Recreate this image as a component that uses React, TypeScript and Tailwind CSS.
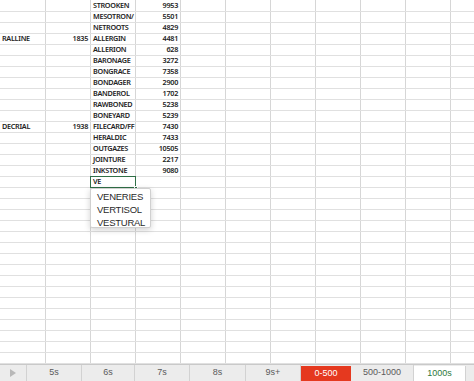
import React from "react";

type Row = [string, string, string, string];

const data: Row[] = [
  ["", "", "STROOKEN", "9953"],
  ["", "", "MESOTRON/", "5501"],
  ["", "", "NETROOTS", "4829"],
  ["RALLINE", "1835", "ALLERGIN", "4481"],
  ["", "", "ALLERION", "628"],
  ["", "", "BARONAGE", "3272"],
  ["", "", "BONGRACE", "7358"],
  ["", "", "BONDAGER", "2900"],
  ["", "", "BANDEROL", "1702"],
  ["", "", "RAWBONED", "5238"],
  ["", "", "BONEYARD", "5239"],
  ["DECRIAL", "1938", "FILECARD/FF", "7430"],
  ["", "", "HERALDIC", "7433"],
  ["", "", "OUTGAZES", "10505"],
  ["", "", "JOINTURE", "2217"],
  ["", "", "INKSTONE", "9080"],
];

const TOTAL_ROWS = 33;
const EMPTY_COLS = 7;

function Cell({
  text,
  align,
  first,
}: {
  text?: string;
  align: "l" | "r";
  first?: boolean;
}) {
  return (
    <div
      className={
        (first ? "w-[46px] " : "w-[45px] ") +
        "shrink-0 h-full border-r border-[#d6d6d6] overflow-hidden whitespace-nowrap flex items-center text-[7.25px] font-semibold tracking-[-0.3px] text-[#222] leading-none " +
        (align === "r" ? "justify-end pr-[2px]" : "justify-start pl-[2px]")
      }
    >
      {text}
    </div>
  );
}

function GridRow({ i }: { i: number }) {
  const r = data[i] ?? ["", "", "", ""];
  const isVE = i === 16;
  return (
    <div
      className={
        (i === 0 ? "h-[12px] " : "h-[11px] ") +
        "flex shrink-0 border-b border-[#e0e0e0]"
      }
    >
      <Cell text={r[0]} align="l" first />
      <Cell text={r[1]} align="r" />
      {isVE ? (
        <div className="relative w-[45px] shrink-0 h-full border-r border-[#d6d6d6]">
          <div className="absolute left-[-1px] top-[-1px] w-[46px] h-[12px] border-[1.5px] border-[#2f6f46] flex items-center pl-[2px] text-[7.25px] font-semibold tracking-[-0.3px] text-[#222] leading-none bg-white z-10">
            VE
            <div className="absolute right-[-3px] bottom-[-3px] w-[4px] h-[4px] bg-[#2f6f46] border border-white" />
          </div>
        </div>
      ) : (
        <Cell text={r[2]} align="l" />
      )}
      <Cell text={r[3]} align="r" />
      {Array.from({ length: EMPTY_COLS }).map((_, k) => (
        <div key={k} className="w-[45px] shrink-0 h-full border-r border-[#d6d6d6]" />
      ))}
    </div>
  );
}

const tabs: { label: string; w: string; kind: "n" | "red" | "white" }[] = [
  { label: "5s", w: "w-[55px]", kind: "n" },
  { label: "6s", w: "w-[53px]", kind: "n" },
  { label: "7s", w: "w-[55px]", kind: "n" },
  { label: "8s", w: "w-[56px]", kind: "n" },
  { label: "9s+", w: "w-[55px]", kind: "n" },
  { label: "0-500", w: "w-[50px]", kind: "red" },
  { label: "500-1000", w: "w-[63px]", kind: "n" },
  { label: "1000s", w: "w-[52px]", kind: "white" },
];

export default function App() {
  return (
    <div
      className="relative w-[474px] h-[381px] overflow-hidden bg-white flex flex-col"
      style={{ fontFamily: '"Noto Sans", "Liberation Sans", sans-serif' }}
    >
      <div className="flex flex-col h-[364px] overflow-hidden">
        {Array.from({ length: TOTAL_ROWS }).map((_, i) => (
          <GridRow key={i} i={i} />
        ))}
      </div>

      {/* autocomplete dropdown */}
      <div
        className="absolute left-[90px] top-[188px] w-[61px] h-[40px] bg-white border border-[#d0d0d0] rounded-[2px] shadow-[0_2px_6px_rgba(0,0,0,0.18)] flex flex-col pt-[1px] pl-[6px] text-[9.5px] tracking-[-0.25px] text-[#2a2a2a] leading-[13px] z-20"
        style={{ fontFamily: '"Liberation Sans", Arial, sans-serif' }}
      >
        <div>VENERIES</div>
        <div>VERTISOL</div>
        <div>VESTURAL</div>
      </div>

      {/* sheet tabs */}
      <div
        className="flex h-[17px] bg-[#ececec] border-t border-[#c9c9c9] text-[9px] text-[#5a5a5a]"
        style={{ fontFamily: '"Liberation Sans", Arial, sans-serif' }}
      >
        <div className="w-[27px] shrink-0 flex items-center justify-center border-r border-[#d2d2d2]">
          <svg width="6" height="8" viewBox="0 0 6 8">
            <path d="M0 0 L6 4 L0 8 Z" fill="#b8b8b8" />
          </svg>
        </div>
        {tabs.map((t) => (
          <div
            key={t.label}
            className={
              t.w +
              " shrink-0 flex items-center justify-center " +
              (t.kind === "red"
                ? "bg-[#e5391f] text-white mt-[1px]"
                : t.kind === "white"
                ? "bg-white text-[#2e7a3c] mt-[1px] border-r border-[#d2d2d2]"
                : "border-r border-[#d2d2d2]")
            }
          >
            {t.label}
          </div>
        ))}
        <div className="flex-1" />
      </div>
    </div>
  );
}
